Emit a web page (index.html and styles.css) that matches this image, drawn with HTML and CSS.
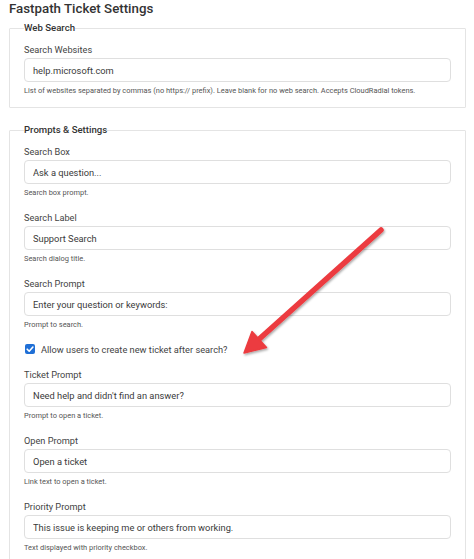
FILE: index.html
```html
<!DOCTYPE html>
<html lang="en">
<head>
<meta charset="utf-8">
<title>Fastpath Ticket Settings</title>
<link rel="stylesheet" href="styles.css">
</head>
<body>
<div class="page">
  <h1 class="title">Fastpath Ticket Settings</h1>

  <fieldset class="group first">
    <legend>Web Search</legend>
    <div class="field">
      <label class="label">Search Websites</label>
      <input class="input" type="text" value="help.microsoft.com">
      <div class="help">List of websites separated by commas (no https:// prefix). Leave blank for no web search. Accepts CloudRadial tokens.</div>
    </div>
  </fieldset>

  <fieldset class="group">
    <legend>Prompts &amp; Settings</legend>
    <div class="field">
      <label class="label">Search Box</label>
      <input class="input" type="text" value="Ask a question...">
      <div class="help">Search box prompt.</div>
    </div>
    <div class="field">
      <label class="label">Search Label</label>
      <input class="input" type="text" value="Support Search">
      <div class="help">Search dialog title.</div>
    </div>
    <div class="field">
      <label class="label">Search Prompt</label>
      <input class="input" type="text" value="Enter your question or keywords:">
      <div class="help">Prompt to search.</div>
    </div>
    <div class="check-row">
      <span class="check"><svg viewBox="0 0 10 10" width="10" height="10"><path d="M2.2 5.2 L4.2 7.2 L7.9 3" fill="none" stroke="#fff" stroke-width="1.6" stroke-linecap="round" stroke-linejoin="round"/></svg></span>
      <span class="check-label">Allow users to create new ticket after search?</span>
    </div>
    <div class="field">
      <label class="label">Ticket Prompt</label>
      <input class="input" type="text" value="Need help and didn't find an answer?">
      <div class="help">Prompt to open a ticket.</div>
    </div>
    <div class="field">
      <label class="label">Open Prompt</label>
      <input class="input" type="text" value="Open a ticket">
      <div class="help">Link text to open a ticket.</div>
    </div>
    <div class="field">
      <label class="label">Priority Prompt</label>
      <input class="input" type="text" value="This issue is keeping me or others from working.">
      <div class="help">Text displayed with priority checkbox.</div>
    </div>
  </fieldset>
</div>

<svg class="arrow" width="474" height="559" viewBox="0 0 474 559">
  <defs>
    <filter id="sh" x="-20%" y="-20%" width="140%" height="140%">
      <feDropShadow dx="1" dy="1.5" stdDeviation="1.2" flood-color="#000" flood-opacity="0.35"/>
    </filter>
  </defs>
  <g filter="url(#sh)">
    <line x1="381" y1="230" x2="257" y2="341" stroke="#ec3b3f" stroke-width="5.5" stroke-linecap="round"/>
    <polygon points="244,353 266.5,347.5 252,331.5" fill="#ec3b3f" stroke="#ec3b3f" stroke-width="1.5" stroke-linejoin="round"/>
  </g>
</svg>
</body>
</html>
```

FILE: styles.css
```css
* { box-sizing: border-box; }

html, body {
  margin: 0;
  padding: 0;
  background: #ffffff;
}

body {
  font-family: Roboto, "Open Sans", Arial, sans-serif;
  color: #333333;
  width: 474px;
  height: 559px;
  overflow: hidden;
  position: relative;
}

.page {
  padding: 0 8px 0 9px;
}

.title {
  margin: 0;
  font-size: 13.3px;
  font-weight: 500;
  line-height: 17px;
  color: #333333;
}

.group {
  margin: 4px 0 0 0;
  padding: 7px 14px 11px 14px;
  border: 1px solid #e4e4e4;
  border-radius: 1px;
  min-width: 0;
}

.group + .group {
  margin-top: 15px;
  padding-bottom: 40px;
}

.group legend {
  padding: 0;
  font-size: 9.6px;
  font-weight: 500;
  line-height: 14px;
  color: #333333;
}

.field {
  display: flex;
  flex-direction: column;
}

.field + .field {
  margin-top: 12px;
}

.label {
  font-size: 9.2px;
  line-height: 16px;
  color: #444444;
}

.input {
  display: block;
  width: 100%;
  height: 24px;
  margin: 0;
  padding: 0 8px;
  border: 1px solid #dfdfdf;
  border-radius: 4px;
  background: #ffffff;
  font-family: inherit;
  font-size: 9.3px;
  color: #3a3a3a;
  outline: none;
}

.help {
  margin-top: 4px;
  font-size: 7.45px;
  line-height: 10px;
  color: #555555;
}

.check-row {
  display: flex;
  align-items: center;
  gap: 6px;
  height: 16px;
  margin: 11px 0 10px 1px;
}

.check {
  display: flex;
  align-items: center;
  justify-content: center;
  width: 10px;
  height: 10px;
  border-radius: 2px;
  background: #1f6fd6;
}

.check svg { display: block; }

.check-label {
  font-size: 9.25px;
  color: #444444;
}

.arrow {
  position: absolute;
  left: 0;
  top: 0;
  pointer-events: none;
}
```
